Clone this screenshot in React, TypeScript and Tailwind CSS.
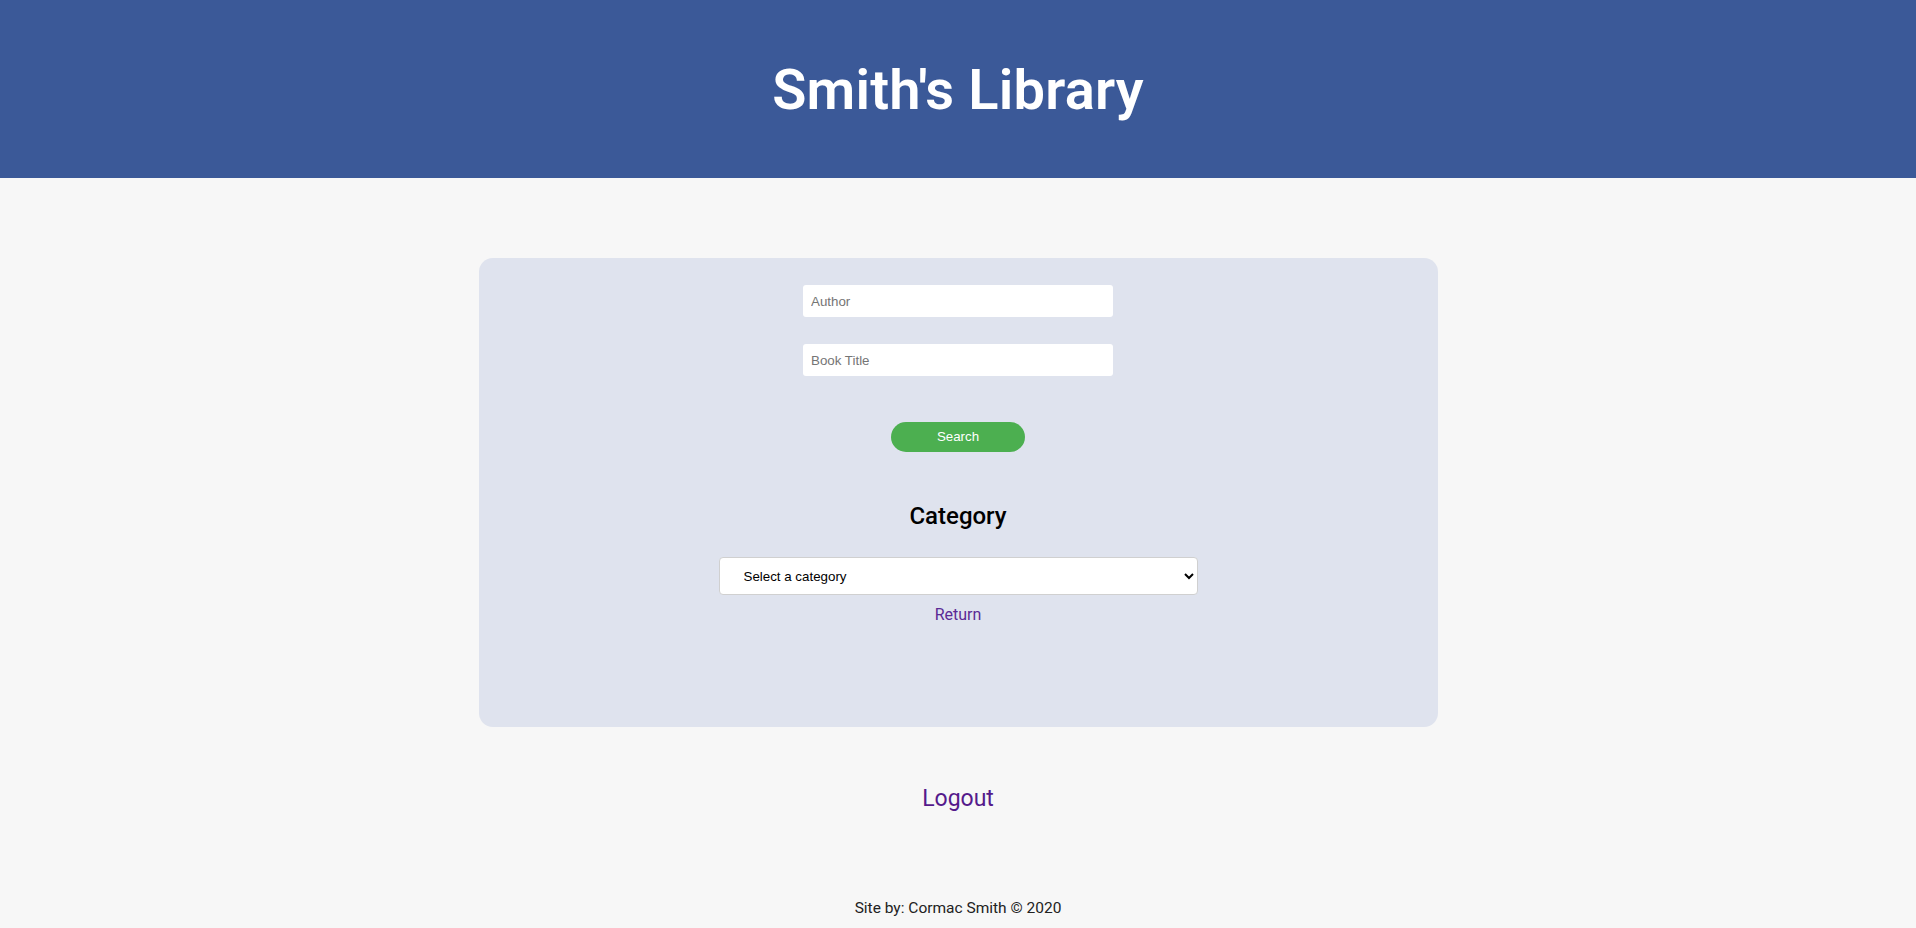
export default function App() {
  return (
    <div className="min-h-screen bg-[#f7f7f7] font-['Roboto',sans-serif]">
      <header className="h-[178px] bg-[#3b5998] flex items-center justify-center">
        <h1 className="text-white text-[56px] font-semibold leading-none tracking-[0.2px] pt-[2px]">Smith's Library</h1>
      </header>

      <main className="pt-[80px] flex flex-col items-center">
        <section className="w-[959px] h-[469px] rounded-[14px] bg-[#dfe3ee] flex flex-col items-center pt-[27px]">
          <input
            type="text"
            placeholder="Author"
            className="w-[310px] h-[32px] rounded-[3px] bg-white px-2 text-[13.33px] font-['Liberation_Sans',Arial,sans-serif] text-black placeholder:text-[#757575] outline-none"
          />
          <input
            type="text"
            placeholder="Book Title"
            className="mt-[27px] w-[310px] h-[32px] rounded-[3px] bg-white px-2 text-[13.33px] font-['Liberation_Sans',Arial,sans-serif] text-black placeholder:text-[#757575] outline-none"
          />
          <button className="mt-[46px] w-[134px] h-[30px] rounded-full bg-[#4caf50] text-white text-[13.33px] font-['Liberation_Sans',Arial,sans-serif]">
            Search
          </button>

          <h2 className="mt-[48px] text-[24px] leading-[32px] font-medium text-black">Category</h2>

          <select
            defaultValue=""
            className="mt-[25px] w-[479px] h-[38px] rounded-[4px] border border-[#d0d0d0] bg-white pl-5 pr-1 text-[13.33px] text-black font-['Liberation_Sans',Arial,sans-serif]"
          >
            <option value="">Select a category</option>
            <option value="fiction">Fiction</option>
            <option value="history">History</option>
            <option value="science">Science</option>
          </select>

          <a href="#" className="mt-[8px] text-[16px] leading-[24px] text-[#5b2a95]">Return</a>
        </section>

        <a href="#" className="mt-[56px] text-[23px] leading-[32px] text-[#551a8b]">Logout</a>

        <footer className="mt-[81px] text-[15.5px] leading-[24px] text-[#222]">Site by: Cormac Smith © 2020</footer>
      </main>
    </div>
  );
}
